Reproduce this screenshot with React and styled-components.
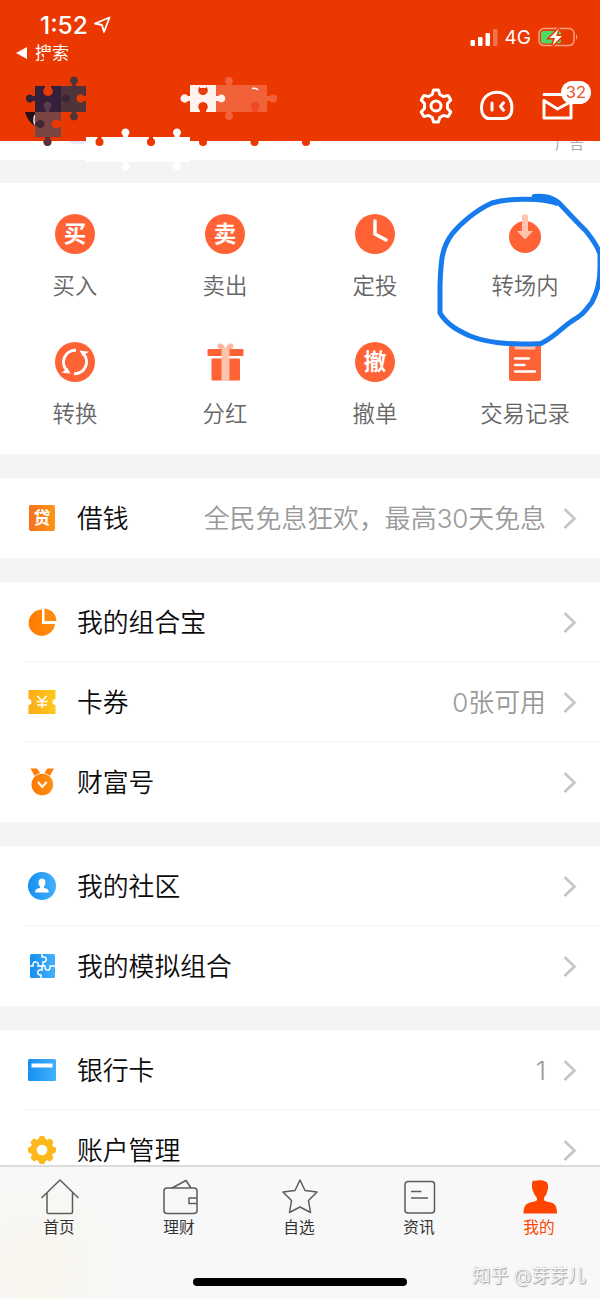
import React from "react";
import styled, { createGlobalStyle } from "styled-components";

const GlobalStyle = createGlobalStyle`
  * {
    box-sizing: border-box;
  }
  body {
    margin: 0;
    background: #f4f4f4;
    font-family: Inter, "Noto Sans CJK SC", sans-serif;
  }
  svg {
    display: block;
    flex-shrink: 0;
  }
`;

const Screen = styled.div`
  position: relative;
  display: flex;
  flex-direction: column;
  width: 600px;
  height: 1299px;
  overflow: hidden;
`;

const Header = styled.header`
  height: 141px;
  flex-shrink: 0;
  background: #eb3700;
  color: #fff;
`;

const StatusBar = styled.div`
  display: flex;
  justify-content: space-between;
  height: 68px;
  padding: 11px 22px 0 16px;
`;

const Clock = styled.div`
  display: flex;
  align-items: center;
  gap: 6px;
  height: 28px;
  padding-left: 24px;
  font-size: 24.5px;
  font-weight: 500;
`;

const BackLink = styled.div`
  position: relative;
  display: flex;
  align-items: center;
  gap: 8px;
  height: 28px;
  font-size: 17px;
  line-height: 30px;
`;

const BackPatch = styled.span`
  position: absolute;
  left: 28px;
  top: 13px;
  width: 8px;
  height: 11px;
  background: #eb3700;
`;

const Signals = styled.div`
  display: flex;
  align-items: center;
  height: 52px;
  font-size: 19px;
  gap: 7px;
`;

const HeaderActions = styled.div`
  display: flex;
  justify-content: flex-end;
  align-items: center;
  gap: 25px;
  height: 76px;
  padding-right: 26px;
`;

const MailBox = styled.div`
  position: relative;
`;

const Badge = styled.span`
  position: absolute;
  left: 21px;
  top: -10px;
  width: 30px;
  height: 23px;
  border-radius: 12px;
  background: #fff;
  color: #e8512a;
  font-size: 16.5px;
  line-height: 23px;
  text-align: center;
`;

const AdStrip = styled.div`
  display: flex;
  justify-content: flex-end;
  height: 19px;
  flex-shrink: 0;
  padding-right: 16px;
  overflow: hidden;
  background: #fff;
  color: #aaa;
  font-size: 14.5px;
  line-height: 5px;
`;

const Mosaic = styled.svg`
  position: absolute;
  left: 0;
  top: 0;
  pointer-events: none;
`;

const ActionGrid = styled.section`
  display: grid;
  grid-template-columns: repeat(4, 150px);
  grid-auto-rows: 128px;
  height: 271px;
  flex-shrink: 0;
  margin-top: 23px;
  padding-top: 27px;
  background: #fff;
`;

const Action = styled.div`
  display: flex;
  flex-direction: column;
  align-items: center;
  gap: 12px;
  color: #666;
  font-size: 22.4px;
  font-weight: 350;
  line-height: 32px;
`;

const RoundGlyph = styled.span`
  width: 40px;
  height: 40px;
  margin: 4px;
  border-radius: 50%;
  background: #ff6335;
  color: #fff;
  font-size: 22.5px;
  font-weight: 600;
  line-height: 40px;
  text-align: center;
`;

const Group = styled.section`
  flex-shrink: 0;
  margin-top: 24px;
  background: #fff;
`;

const Row = styled.div`
  display: flex;
  align-items: center;
  height: 80px;
  margin-left: 25px;
  padding-right: 23px;
  border-bottom: 1px solid #f4f4f4;

  &:last-child {
    border-bottom: 0;
  }
`;

const RowIcon = styled.span`
  width: 34px;
  display: flex;
  justify-content: center;
`;

const LoanIcon = styled.span`
  width: 26px;
  height: 26px;
  border-radius: 2px;
  background: linear-gradient(90deg, #f8701b, #fb9519);
  color: #fff;
  font-size: 17px;
  font-weight: 700;
  line-height: 26px;
  text-align: center;
`;

const RowLabel = styled.span`
  flex: 1;
  margin-left: 18px;
  padding-top: 2px;
  color: #0c0c0c;
  font-size: 25.8px;
  font-weight: 350;
  line-height: 36px;
  white-space: nowrap;
`;

const RowValue = styled.span`
  margin-right: 17px;
  padding-top: 2px;
  color: #999;
  font-size: 25.9px;
  font-weight: 350;
  line-height: 36px;
  white-space: nowrap;
`;

const TabBar = styled.nav`
  position: absolute;
  left: 0;
  right: 0;
  bottom: 0;
  display: grid;
  grid-template-columns: repeat(5, 120px);
  height: 134px;
  padding-top: 11px;
  border-top: 2px solid #dcdcdc;
  background: radial-gradient(circle at 36px 100px, #faf6ed 0, #f8f7f4 55px, #f8f8f8 130px);
`;

const Tab = styled.div`
  display: flex;
  flex-direction: column;
  align-items: center;
  padding-right: 2px;
  color: ${(p) => (p.$active ? "#ff4500" : "#333")};
  font-size: 15.7px;
  line-height: 24px;
`;

const HomeIndicator = styled.div`
  position: absolute;
  left: 193px;
  bottom: 13px;
  width: 214px;
  height: 8px;
  border-radius: 4px;
  background: #000;
`;

const Watermark = styled.div`
  position: absolute;
  right: 14px;
  bottom: 9px;
  color: #fafafa;
  font-size: 18.2px;
  font-weight: 350;
  line-height: 30px;
  white-space: nowrap;
  text-shadow: 1px 1px 1px #999, 0 0 1px #aaa;
`;

const StatusIcons = () => (
  <Signals>
    <svg width="28" height="18" viewBox="0 0 28 18" fill="#fff">
      <rect x="0.5" y="12" width="4.5" height="6" rx="1" />
      <rect x="8" y="9" width="4.5" height="9" rx="1" />
      <rect x="15.5" y="5" width="4.5" height="13" rx="1" />
      <rect x="23" y="1" width="4.5" height="17" rx="1" opacity=".3" />
    </svg>
    4G
    <svg width="40" height="20" viewBox="0 0 40 20">
      <rect x="1" y="1.6" width="35" height="17" rx="5" fill="none" stroke="#f7a184" strokeWidth="1.5" />
      <rect x="3" y="4" width="20" height="12.5" rx="2.5" fill="#4cd964" />
      <path d="M38 7q2.5 3 0 6z" fill="#f7a184" />
      <path d="M21 1.5 11.500 11h5.500L14.500 18.500 24 9h-6z" fill="#fff" stroke="#eb3700" strokeWidth="3" paintOrder="stroke" />
    </svg>
  </Signals>
);

const GearIcon = () => (
  <svg width="36" height="36" viewBox="0 0 36 36" fill="none" stroke="#fff" strokeWidth="3" strokeLinejoin="round">
    <path d="M15.600 2h4.800l1.500 4.600q2 .7 3.500 2l4.800-1.200 2.600 4.600-3.300 3.600v4.800l3.300 3.600-2.600 4.600-4.800-1.200q-1.500 1.300-3.500 2L20.400 34h-4.800l-1.500-4.600q-2-.7-3.500-2l-4.800 1.200L3.200 24l3.300-3.600v-4.800L3.200 12l2.600-4.600 4.800 1.200q1.500-1.300 3.500-2z" />
    <circle cx="18" cy="18" r="5" />
  </svg>
);

const FaceIcon = () => (
  <svg width="36" height="36" viewBox="0 0 36 36" fill="none" stroke="#fff" strokeWidth="3" strokeLinecap="round" strokeLinejoin="round">
    <path d="M10.500 30.500C5.500 30.500 2.500 26 2.500 20 2.500 10.500 9 4.200 18 4.200S33 10.500 33 20c0 6-3 10.500-8 10.500z" />
    <path d="M13 15v7M24.500 14.800 21.500 18.500l3 3.700" />
  </svg>
);

const MailIcon = () => (
  <svg width="34" height="30" viewBox="0 0 34 30" fill="none" stroke="#fff" strokeWidth="3" strokeLinecap="round" strokeLinejoin="round">
    <path d="M4 3.500h19.500M4 9.500v17.500h27V13M4 9.500l13.500 8.500 12-6.500" />
  </svg>
);

const PuzzleMosaic = () => (
  <Mosaic width="600" height="180" viewBox="0 0 600 180">
    <path d="M25 112h10l2 15Q28 123 25 112z" fill="#241019" />
    <path d="M35 115q-3 7 2 12" stroke="#eee" strokeWidth="1.500" fill="none" />
    <path d="M35 86h10v1.500a4.800 4.800 0 1 0 6 0V86h10v26H35v-11h-2a4 4 0 1 1 0-5h2z" fill="#34203b" />
    <path d="M61 86h11v-2a4 4 0 1 1 4 0v2h10v10h-2a4.200 4.200 0 1 0 0 5h2v11H76v1a4 4 0 1 1-4 0v-1H61z" fill="#4f3439" />
    <path d="M61 96.500h2a4 4 0 1 1 0 4h-2z" fill="#3c2534" />
    <path d="M35 112h26v9h-2a4.200 4.200 0 1 0 0 6h2v10H50v2a4 4 0 1 1-5 0v-2H35z" fill="#784543" />
    <path d="M45.500 112v-3a4 4 0 1 1 4 0v3z" fill="#5b3b4d" />
    <path d="M35 122h2a4 4 0 1 1 0 4h-2z" fill="#412533" />
    <path d="M45 137h5v2a4 4 0 1 1-5 0z" fill="#5c3438" />
    <path d="M190 85h10v1.500a4.800 4.800 0 1 0 6 0V85h10v11h2a4.200 4.200 0 1 1 0 5h-2v11h-10v-1.500a4.800 4.800 0 1 0-6 0v1.500h-10v-11h-2a4.200 4.200 0 1 1 0-5h2z" fill="#fff2ef" />
    <path d="M200 85h6v3h-6z" fill="#fff2ef" />
    <path d="M199 90h8q-4 5-8 0z" fill="#d9482e" />
    <path d="M216 85h10.500v-1a4 4 0 1 1 5 0v1H267v11h3a4 4 0 1 1 0 5h-3v11h-35.500v1a4 4 0 1 1-5 0v-1H216v-11h2a4.200 4.200 0 1 0 0-5h-2z" fill="#f26238" />
    <path d="M252.500 112v-2a4.500 4.500 0 1 1 5 0v2z" fill="#ee4923" />
    <path d="M252 88.500q4-1 6 1.500" stroke="#fff" strokeWidth="1.600" fill="none" />
    <path d="M69 142q8 4 17 1v-2H69z" fill="#e9e7fa" />
    <path d="M86 137h37v-1.500a4 4 0 1 1 5 0v1.500h46.500v-1.500a4 4 0 1 1 5 0v1.500H190v25h-10.500v1.500a4 4 0 1 1-5 0v-1.500H128v1.500a4 4 0 1 1-5 0v-1.500H86z" fill="#fff" />
    <g fill="#eb3700">
      {[99.5, 151, 203, 254.5, 306].map((x) => (
        <circle key={x} cx={x} cy="142" r="4" />
      ))}
      <path d="M97.500 137h4v4h-4zM149 137h4v4h-4z" />
    </g>
  </Mosaic>
);

const ActionSvg = ({ children }) => (
  <svg width="48" height="48" viewBox="0 0 48 48" fill="#ff6335">
    {children}
  </svg>
);

const ClockIcon = () => (
  <ActionSvg>
    <circle cx="24" cy="24" r="20" />
    <path d="M24 11v13l11 6" fill="none" stroke="#fff" strokeWidth="3.500" strokeLinecap="round" />
  </ActionSvg>
);

const TransferIcon = () => (
  <ActionSvg>
    <circle cx="24" cy="27" r="16" />
    <path d="M21 6q0-1.500 1.500-1.500h3Q27 4.500 27 6v15h5l-7 7.500q-1 1-2 0L16 21h5z" fill="#ffc3b0" />
  </ActionSvg>
);

const SwapIcon = () => (
  <ActionSvg>
    <circle cx="24" cy="24" r="20" />
    <path d="M25 12.300A11.800 11.800 0 0 0 16 32.500M23 35.700A11.800 11.800 0 0 0 32 15.500" fill="none" stroke="#fff" strokeWidth="3" />
    <path d="m19.500 35.500-9-.8 6-4.500zM28.500 12.500l9.500 1.300-6.500 4z" fill="#fff" />
  </ActionSvg>
);

const GiftIcon = () => (
  <ActionSvg>
    <rect x="6.500" y="11" width="36" height="7" rx="1" />
    <rect x="10.500" y="20.500" width="28.500" height="22" rx="1" />
    <path d="M20.500 10.500h8V43h-8z" fill="#ffc3b0" />
    <path d="M24.500 11c-1.500-6-7.500-7-8-3.500-.2 1.500 1 3 2.500 3.500zM24.500 11c1.500-6 7.500-7 8-3.500.2 1.500-1 3-2.500 3.500z" fill="#ffb49d" />
  </ActionSvg>
);

const RecordIcon = () => (
  <ActionSvg>
    <rect x="8" y="7" width="32" height="36" rx="2.500" />
    <path d="M13 7h22l-1 4.500H14z" fill="#ffc3b0" />
    <path d="M14 20.500h14M14 27h9.500M14 33.500h20" stroke="#fff" strokeWidth="2.400" strokeLinecap="round" />
  </ActionSvg>
);

const Glyph = ({ char }) => <RoundGlyph>{char}</RoundGlyph>;

const actions = [
  { label: "买入", icon: <Glyph char="买" /> },
  { label: "卖出", icon: <Glyph char="卖" /> },
  { label: "定投", icon: <ClockIcon /> },
  { label: "转场内", icon: <TransferIcon /> },
  { label: "转换", icon: <SwapIcon /> },
  { label: "分红", icon: <GiftIcon /> },
  { label: "撤单", icon: <Glyph char="撤" /> },
  { label: "交易记录", icon: <RecordIcon /> },
];

const SmallSvg = ({ children }) => (
  <svg width="30" height="30" viewBox="0 0 30 30">
    <defs>
      <linearGradient id="orange">
        <stop stopColor="#ff7800" />
        <stop offset="1" stopColor="#ff9011" />
      </linearGradient>
      <linearGradient id="yellow">
        <stop stopColor="#fbac18" />
        <stop offset="1" stopColor="#ffc81c" />
      </linearGradient>
      <linearGradient id="blue">
        <stop stopColor="#168ff0" />
        <stop offset="1" stopColor="#43b0fb" />
      </linearGradient>
    </defs>
    {children}
  </svg>
);

const PieIcon = () => (
  <SmallSvg>
    <path d="M15 2.500A13.200 13.200 0 1 0 28 17H15z" fill="url(#orange)" />
    <path d="M17.500 1.500q11 1 12 12.500h-12z" fill="#ff8a10" />
  </SmallSvg>
);

const CouponIcon = () => (
  <SmallSvg>
    <path d="M1.500 3H28.500v9a3 3 0 0 0 0 6v9H1.500v-9a3 3 0 0 0 0-6z" fill="url(#yellow)" />
    <path d="m10.500 9 4.500 5 4.500-5M9.500 14.500h11M10 18h10M15 14v7" fill="none" stroke="#fff" strokeWidth="1.600" />
  </SmallSvg>
);

const MedalIcon = () => (
  <SmallSvg>
    <path d="M3.500 1.500h6.500l3.500 5-5.500 3zM27 1.500h-6.500l-3.500 5 5.500 3z" fill="#ff7d08" />
    <circle cx="15.300" cy="17.500" r="11.500" fill="#fff" />
    <circle cx="15.300" cy="17.500" r="10.800" fill="url(#orange)" />
    <path d="m11 15 4.300 5 4.300-5" fill="none" stroke="#fff" strokeWidth="2" />
  </SmallSvg>
);

const CommunityIcon = () => (
  <SmallSvg>
    <circle cx="15" cy="15" r="14" fill="url(#blue)" />
    <path d="M11.500 11.500c0-5.500 7-5.500 7 0 0 2-.8 3-1.500 4v1.500c3 .5 4.800 1.200 4.800 4.500H8.200c0-3.300 1.800-4 4.800-4.500v-1.500c-.7-1-1.500-2-1.500-4z" fill="#fff" />
  </SmallSvg>
);

const PuzzleIcon = () => (
  <SmallSvg>
    <rect x="3" y="3" width="25" height="24" rx="1.500" fill="url(#blue)" />
    <path d="M15 3v3c5-2 6 6 1 5v4h-5c2-5-6-6-5 0H3M28 15h-5c1 6-6 5-5 0h-3v4c-5-2-6 6-1 5v3" fill="none" stroke="#fff" strokeWidth="1.500" />
  </SmallSvg>
);

const CardIcon = () => (
  <SmallSvg>
    <rect x="1" y="4" width="28" height="22" rx="1.500" fill="url(#blue)" />
    <path d="M4.500 8.500h21v4h-21z" fill="#fff" />
  </SmallSvg>
);

const CogIcon = () => (
  <SmallSvg>
    <g fill="#fbb91c">
      {[0, 45, 90, 135].map((a) => (
        <rect key={a} x="11.800" y="1" width="6.400" height="28" rx="2.200" transform={`rotate(${a} 15 15)`} />
      ))}
      <circle cx="15" cy="15" r="11.500" />
    </g>
    <circle cx="15" cy="15" r="5.300" fill="#fff" />
  </SmallSvg>
);

const groups = [
  [{ label: "借钱", value: "全民免息狂欢，最高30天免息", icon: <LoanIcon>贷</LoanIcon> }],
  [
    { label: "我的组合宝", icon: <PieIcon /> },
    { label: "卡券", value: "0张可用", icon: <CouponIcon /> },
    { label: "财富号", icon: <MedalIcon /> },
  ],
  [
    { label: "我的社区", icon: <CommunityIcon /> },
    { label: "我的模拟组合", icon: <PuzzleIcon /> },
  ],
  [
    { label: "银行卡", value: "1", icon: <CardIcon /> },
    { label: "账户管理", icon: <CogIcon /> },
  ],
];

const Chevron = () => (
  <svg width="14" height="22" viewBox="0 0 14 22" fill="none" stroke="#c4c4c4" strokeWidth="2.600">
    <path d="m1.500 2 10 9.500-10 9.500" />
  </svg>
);

const TabSvg = ({ children }) => (
  <svg width="40" height="38" viewBox="0 0 40 38" fill="none" stroke="#5c5c5c" strokeWidth="1.500" strokeLinejoin="round">
    {children}
  </svg>
);

const tabs = [
  { label: "首页", icon: <path d="M2.500 20 21 2l18.500 18M8 15v19q0 1.500 1.500 1.500h22.500q1.500 0 1.500-1.500V15" /> },
  {
    label: "理财",
    icon: (
      <>
        <rect x="5" y="10" width="33" height="25.500" rx="3" />
        <path d="M13 10 27 2.500l5 7.500M38 20h-8v5.500h8" />
      </>
    ),
  },
  { label: "自选", icon: <path d="m21 2 5 10.500 12 1.500-8.500 8.500 2 12L21 29l-10.500 5.500 2-12L4 14l12-1.500z" /> },
  {
    label: "资讯",
    icon: (
      <>
        <rect x="6" y="3.500" width="29.500" height="31.500" rx="3" />
        <path d="M12 13.500h10.500M12 20h17" />
      </>
    ),
  },
  {
    label: "我的",
    active: true,
    icon: (
      <path
        d="M14 2.500c3 1 9-2.500 14 2 2 3 1 7.500 0 9.500-.5 3.500-3 4-3 7.500.5 2 2.500 2 5 2.500 6 1 8 4 8 11.500H4.500C4.500 28 7 25 13 24c2.500-.5 4.500-.5 5-2.500 0-3.500-3-4-3.500-7.500-2-3-2-9-.5-11.500z"
        fill="#ff4500"
        stroke="none"
      />
    ),
  },
];

// hand-drawn marker ring around 转场内
const MarkerRing = () => (
  <Mosaic width="600" height="370" viewBox="0 0 600 370" fill="none" stroke="#177bee" strokeWidth="5" strokeLinejoin="round" strokeLinecap="round">
    <path d="M556 203C544 199 512 197 492 203 476 210 460 224 452 234 441 249 441 262 440 285V313C447 325 459 331 470 336 490 344 515 345 541 343.500 556 336 560 329 572 321 584 314 585 311 592 302 598 291 600 281 600 268V254C597 245 590 236 586 231L577 222 559 203C551 196 543 196 534 196.500L557 202" />
    <path d="M536 198q11-1 20 5" strokeWidth="5" />
  </Mosaic>
);

const App = () => {
  return (
    <Screen>
      <GlobalStyle />
      <Header>
        <StatusBar>
          <div>
            <Clock>
              1:52
              <svg width="18" height="18" viewBox="0 0 18 18" fill="none" stroke="#fff" strokeWidth="1.800" strokeLinejoin="round">
                <path d="M15.500 1.500 1 7.500l7 1.500 2 7z" />
              </svg>
            </Clock>
            <BackLink>
              <svg width="11" height="12" viewBox="0 0 11 12" fill="#fff">
                <path d="M0 6 11 0v12z" />
              </svg>
              搜索
              <BackPatch />
            </BackLink>
          </div>
          <StatusIcons />
        </StatusBar>
        <HeaderActions>
          <GearIcon />
          <FaceIcon />
          <MailBox>
            <MailIcon />
            <Badge>32</Badge>
          </MailBox>
        </HeaderActions>
      </Header>
      <AdStrip>广告</AdStrip>
      <ActionGrid>
        {actions.map((a) => (
          <Action key={a.label}>
            {a.icon}
            {a.label}
          </Action>
        ))}
      </ActionGrid>
      {groups.map((rows) => (
        <Group key={rows[0].label}>
          {rows.map((r) => (
            <Row key={r.label}>
              <RowIcon>{r.icon}</RowIcon>
              <RowLabel>{r.label}</RowLabel>
              {r.value && <RowValue>{r.value}</RowValue>}
              <Chevron />
            </Row>
          ))}
        </Group>
      ))}
      <TabBar>
        {tabs.map((t) => (
          <Tab key={t.label} $active={t.active}>
            <TabSvg>{t.icon}</TabSvg>
            {t.label}
          </Tab>
        ))}
      </TabBar>
      <HomeIndicator />
      <Watermark>知乎 @芽芽儿</Watermark>
      <PuzzleMosaic />
      <MarkerRing />
    </Screen>
  );
};

export default App;
